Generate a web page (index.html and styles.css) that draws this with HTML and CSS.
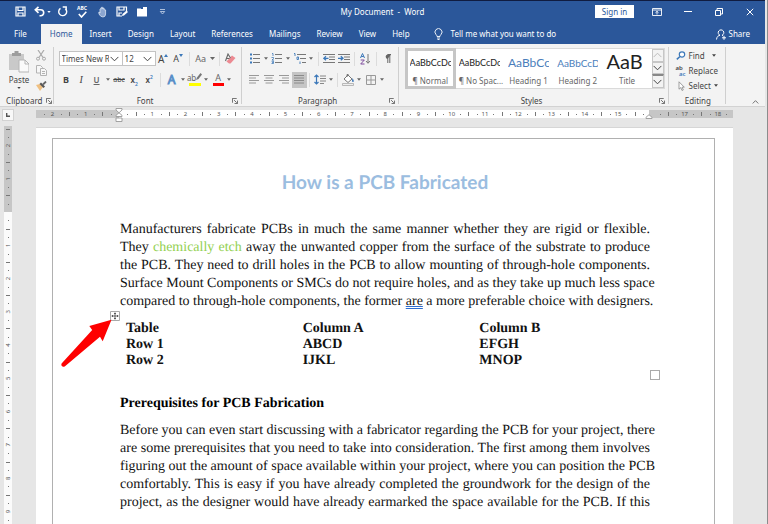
FILE: index.html
```html
<!DOCTYPE html>
<html lang="en">
<head>
<meta charset="utf-8">
<title>My Document - Word</title>
<link rel="stylesheet" href="styles.css">
</head>
<body>
<svg class="defs" aria-hidden="true">
  <symbol id="caret" viewBox="0 0 5 3"><path d="M0 0h5L2.500 3z" fill="currentColor"/></symbol>
  <symbol id="chev" viewBox="0 0 10 6"><path d="M.7.7 5 5 9.300.7" fill="none" stroke="currentColor" stroke-width="1.100"/></symbol>
  <symbol id="launch" viewBox="0 0 7 7"><path d="M.5 5.500v-5h5M2.500 2.500l3 3M6.500 3v3.500H3" fill="none" stroke="currentColor" stroke-width=".9"/></symbol>
</svg>
<div class="app">
  <header class="top">
    <div class="titlebar">
      <div class="quick">
        <button aria-label="Save"><svg width="11" height="11" viewBox="0 0 11 11"><path d="M1 1h9v9H1zM3 1v3.500h5V1M3 10V7h5v3" fill="none" stroke="#fff" stroke-width="1.200"/></svg></button>
        <button class="undo" aria-label="Undo"><svg width="11" height="11" viewBox="0 0 11 11"><path d="M4.500.8 1.300 3.800l3.200 3M1.500 3.800h5.200a3 3 0 0 1 0 6H5.500" fill="none" stroke="#fff" stroke-width="1.600"/></svg><svg class="c" width="4" height="2"><use href="#caret"/></svg></button>
        <button aria-label="Redo"><svg width="11" height="11" viewBox="0 0 11 11"><path d="M8.300 2.600A4 4 0 1 1 3.500 2.300M5.700 1h3.500v3.700" fill="none" stroke="#fff" stroke-width="1.400"/></svg></button>
        <button class="spell" aria-label="Spelling"><span>ABC</span><svg width="9" height="7" viewBox="0 0 9 7"><path d="m.8 3 2.700 3L8.300.7" fill="none" stroke="#fff" stroke-width="1.600"/></svg></button>
        <button aria-label="Touch mode"><svg width="9" height="12" viewBox="0 0 9 12"><path d="M2 7V3q.7-1 1.300 0V1.500q.8-1 1.400 0V3q0-1.500 1.400-.8V4q1-.9 1.500 0v4Q7.500 11 5 11T1 8L.8 6.200Q1.300 5.500 2 7" fill="#8ba5d0" stroke="#dbe4f3" stroke-width=".8"/></svg></button>
        <button aria-label="Save as"><svg width="12" height="11" viewBox="0 0 12 11"><path d="M6 10H1V1h9.500v4M3 1v3h5V1M3 10V7h3" fill="none" stroke="#fff" stroke-width="1.200"/><path d="m6 10 .5-2 4-3.500L12 6l-4 3.600z" fill="#fff"/></svg></button>
        <button aria-label="Open"><svg width="12" height="11" viewBox="0 0 12 11"><path d="M1 10.500v-8h4V3h2V1h4v9.500z" fill="#fff"/></svg></button>
        <button aria-label="Customize"><svg width="7" height="6" viewBox="0 0 7 6"><path d="M1 .5h5M1.300 2.500h4.400L3.500 5z" fill="none" stroke="#cdd8ec" stroke-width=".8"/></svg></button>
      </div>
      <div class="doc-name">My Document &nbsp;-&nbsp; Word</div>
      <div class="sys">
        <button class="signin">Sign in</button>
        <button aria-label="Ribbon display options"><svg width="10" height="8" viewBox="0 0 10 8"><path d="M.5.5h9v7h-9zM.5 2h9M5 6.500v-3M3.500 4.700 5 3.300l1.500 1.400" fill="none" stroke="#fff" stroke-width=".9"/></svg></button>
        <button aria-label="Minimize"><svg width="8" height="8"><path d="M0 3.500h8" stroke="#fff"/></svg></button>
        <button aria-label="Restore"><svg width="8" height="8" viewBox="0 0 8 8"><path d="M.5 2.500h5v5h-5zM2 2.500v-2h5.500V6h-2" fill="none" stroke="#fff"/></svg></button>
        <button aria-label="Close"><svg width="8" height="8" viewBox="0 0 8 8"><path d="m.8.8 6.400 6.400M7.200.8.8 7.200" stroke="#fff"/></svg></button>
      </div>
    </div>
    <nav class="tabs">
      <button class="file">File</button>
      <button class="active">Home</button>
      <button>Insert</button>
      <button>Design</button>
      <button>Layout</button>
      <button>References</button>
      <button>Mailings</button>
      <button>Review</button>
      <button>View</button>
      <button>Help</button>
      <button class="tell"><svg width="9" height="12" viewBox="0 0 9 12"><path d="M3 8.500Q3 7.500 2 6.500A3.500 3.500 0 1 1 7 6.500Q6 7.500 6 8.500zM3 10h3M3.500 11.500h2" fill="none" stroke="#fff" stroke-width=".9"/></svg>Tell me what you want to do</button>
      <button class="share"><svg width="10" height="11" viewBox="0 0 10 11"><path d="M.5 10.500C.8 7.500 2.500 6.500 4 6.300A2.800 2.800 0 1 1 6 6.300L7 6.800M6 8.800h4M8 6.800v4" fill="none" stroke="#fff"/></svg>Share</button>
    </nav>
  </header>

  <section class="ribbon">
    <div class="group clipboard">
      <div class="clip-tools">
        <button class="paste"><svg width="20" height="22" viewBox="0 0 20 22"><path d="M0 3h15v16H0z" fill="#c9c9c9"/><path d="M3 4V2h2.500V0h4v2H12v3H3z" fill="#9d9d9d"/><path d="M10 9h6l4 4v8H10z" fill="#fafafa" stroke="#b5b5b5"/><path d="M16 9v4h4" fill="none" stroke="#b5b5b5"/></svg>Paste<svg width="4" height="2"><use href="#caret"/></svg></button>
        <div class="clip-col">
          <button aria-label="Cut"><svg width="10" height="11" viewBox="0 0 10 11"><path d="m2 0 5 7.500M8 0 3 7.500" stroke="#a9a9a9" stroke-width="1.200"/><circle cx="2" cy="8.700" r="1.500" fill="none" stroke="#a9a9a9"/><circle cx="8" cy="8.700" r="1.500" fill="none" stroke="#a9a9a9"/></svg></button>
          <button aria-label="Copy"><svg width="11" height="11" viewBox="0 0 11 11"><path d="M.5.5h4l2 2V8h-6z" fill="#f7f7f7" stroke="#b3b3b3"/><path d="M4.500 3.500h4l2 2v5h-6zM6 6.500h3M6 8.500h3" fill="#f7f7f7" stroke="#b3b3b3"/></svg></button>
          <button aria-label="Format painter"><svg width="11" height="10" viewBox="0 0 11 10"><path d="m0 4 4-1 3 3-3 4z" fill="#efbf80"/><path d="m3.500 3 1.500-1.500 4 4L7.500 7z" fill="#555"/><path d="m7 3.500 3-3" stroke="#666" stroke-width="1.800"/></svg></button>
        </div>
      </div>
      <div class="label"><span>Clipboard</span><svg width="6" height="6"><use href="#launch"/></svg></div>
    </div>

    <div class="group font">
      <div class="row">
        <button class="combo name"><span>Times New R</span><svg width="9" height="6"><use href="#chev"/></svg></button>
        <button class="combo size"><span>12</span><svg width="9" height="6"><use href="#chev"/></svg></button>
        <button class="i15 grow" aria-label="Grow font"><span>A</span><svg width="4" height="3" viewBox="0 0 4 3"><path d="M0 3h4L2 0z" fill="#3c78b9"/></svg></button>
        <button class="i15 grow shrink" aria-label="Shrink font"><span>A</span><svg width="4" height="3" viewBox="0 0 4 3"><path d="M0 0h4L2 3z" fill="#3c78b9"/></svg></button>
        <i class="sep"></i>
        <button class="split"><span class="g aa">Aa</span><svg width="5" height="3"><use href="#caret"/></svg></button>
        <i class="sep"></i>
        <button class="i15" aria-label="Clear formatting"><svg width="11" height="11" viewBox="0 0 11 11"><path d="m1.500 8.500 5.500-6L10.500 5 5.500 10.500H4z" fill="#ec8a92"/><path d="M.5 8 3 1l2.500 4M1.500 5.500h3" fill="none" stroke="#666" stroke-width="1.100"/></svg></button>
      </div>
      <div class="row">
        <button class="i15"><b>B</b></button>
        <button class="i15"><em>I</em></button>
        <button class="split"><span class="g under">U</span><svg width="4" height="3"><use href="#caret"/></svg></button>
        <button class="i15"><s>abc</s></button>
        <button class="i15"><span class="x">x<sub>2</sub></span></button>
        <button class="i15"><span class="x">x<sup>2</sup></span></button>
        <i class="sep"></i>
        <button class="split"><span class="g outline">A</span><svg width="4" height="3"><use href="#caret"/></svg></button>
        <button class="split"><span class="g mark">ab<svg width="6" height="7" viewBox="0 0 6 7"><path d="M0 7 1 4.500 4.500 0 6 1.500 2.500 6z" fill="#777"/></svg></span><svg width="4" height="3"><use href="#caret"/></svg></button>
        <button class="split"><span class="g color">A</span><svg width="4" height="3"><use href="#caret"/></svg></button>
      </div>
      <div class="label"><span>Font</span><svg width="6" height="6"><use href="#launch"/></svg></div>
    </div>

    <div class="group para">
      <div class="row">
        <button class="split" aria-label="Bullets"><svg class="g" width="16" height="11" viewBox="0 0 16 11"><path d="M6 1.500h7M6 5.500h7M6 9.500h7" stroke="#777"/><path d="M3 .5h2v2H3zM3 4.500h2v2H3zM3 8.500h2v2H3z" fill="#3c78b9"/></svg><svg width="4" height="3"><use href="#caret"/></svg></button>
        <button class="split" aria-label="Numbering"><svg class="g" width="16" height="11" viewBox="0 0 16 11"><path d="M6 1.500h7M6 5.500h7M6 9.500h7" stroke="#777"/><path d="M3 .5h1v2.500M2.500 4.500h2v1l-1.500 1.500h2M2.500 8.200h2v2.300h-2M3 9.400h1" fill="none" stroke="#3c78b9" stroke-width=".8"/></svg><svg width="4" height="3"><use href="#caret"/></svg></button>
        <button class="split" aria-label="Multilevel list"><svg class="g" width="16" height="11" viewBox="0 0 16 11"><path d="M5 1.500h9M8 5.500h6M10 9.500h4" stroke="#777"/><path d="M2 .5h1v2.500M5 4h1.500v2.500H5zM8 8.500v2.500" fill="none" stroke="#3c78b9" stroke-width=".9"/></svg><svg width="4" height="3"><use href="#caret"/></svg></button>
        <i class="sep"></i>
        <button class="i15" aria-label="Decrease indent"><svg width="12" height="9" viewBox="0 0 12 9"><path d="M0 .5h12M6 3h6M6 5.500h6M0 8.500h12" stroke="#777"/><path d="M5.500 4.300H1M3 2.300.8 4.300 3 6.300" fill="none" stroke="#3c78b9" stroke-width="1.300"/></svg></button>
        <button class="i15" aria-label="Increase indent"><svg width="12" height="9" viewBox="0 0 12 9"><path d="M0 .5h12M6 3h6M6 5.500h6M0 8.500h12" stroke="#777"/><path d="M0 4.300h4.500M2.800 2.300 5 4.300 2.800 6.300" fill="none" stroke="#3c78b9" stroke-width="1.300"/></svg></button>
        <i class="sep"></i>
        <button class="i15" aria-label="Sort"><svg width="10" height="12" viewBox="0 0 10 12"><path d="m.5 5 2-4.500 2 4.500M1.200 3.500h2.600" fill="none" stroke="#3c78b9"/><path d="M.7 7h3.600L.7 11h3.800" fill="none" stroke="#7c4a9c"/><path d="M8 1v9M6 8l2 2.300L10 8" fill="none" stroke="#777"/></svg></button>
        <i class="sep"></i>
        <button class="i15" aria-label="Show marks"><svg width="7" height="9" viewBox="0 0 7 9"><path d="M3.500 5A2.300 2.300 0 0 1 3.500.5H7" fill="#666"/><path d="M3.800 9V.5H7M5.800 9V.5" fill="none" stroke="#666"/></svg></button>
      </div>
      <div class="row">
        <button class="i15" aria-label="Align left"><svg width="10" height="9"><path d="M0 .5h10M0 3h7M0 5.500h10M0 8h7" stroke="#999"/></svg></button>
        <button class="i15" aria-label="Center"><svg width="10" height="9"><path d="M0 .5h10M1.500 3h7M0 5.500h10M1.500 8h7" stroke="#999"/></svg></button>
        <button class="i15" aria-label="Align right"><svg width="10" height="9"><path d="M0 .5h10M3 3h7M0 5.500h10M3 8h7" stroke="#999"/></svg></button>
        <button class="i15 on" aria-label="Justify"><svg width="10" height="9"><path d="M0 .5h10M0 3h10M0 5.500h10M0 8h10" stroke="#8a8a8a"/></svg></button>
        <i class="sep tight"></i>
        <button class="split" aria-label="Line spacing"><svg class="g" width="16" height="11" viewBox="0 0 16 11"><path d="M8 2h6M8 4.500h6M8 7h6M8 9.500h4" stroke="#888"/><path d="M4.500 1v9M2.500 3l2-2 2 2M2.500 8l2 2 2-2" fill="none" stroke="#3c78b9" stroke-width="1.200"/></svg><svg width="4" height="3"><use href="#caret"/></svg></button>
        <i class="sep tight"></i>
        <button class="split" aria-label="Shading"><svg class="g" width="16" height="12" viewBox="0 0 16 12"><path d="m4 5 4-4 4 4-4 3.500z" fill="#fff" stroke="#777"/><path d="M7 3V.5h1.500" fill="none" stroke="#777"/><path d="M12.500 4q2 3 .8 4-1.300.3-1.300-1.500" fill="#3c78b9"/><path d="M2.500 9.500h11v2h-11z" fill="#eee" stroke="#aaa" stroke-width=".8"/></svg><svg width="4" height="3"><use href="#caret"/></svg></button>
        <button class="split" aria-label="Borders"><svg class="g" width="16" height="10" viewBox="0 0 16 10"><path d="M3.500.5h9v9h-9zM8 .5v9M3.500 5h9" fill="none" stroke="#999"/></svg><svg width="4" height="3"><use href="#caret"/></svg></button>
      </div>
      <div class="label"><span>Paragraph</span><svg width="6" height="6"><use href="#launch"/></svg></div>
    </div>

    <div class="group styles">
      <div class="gallery">
        <button class="style sel"><span class="sample">AaBbCcDc</span><span>¶ Normal</span></button>
        <button class="style"><span class="sample">AaBbCcDc</span><span>¶ No Spac...</span></button>
        <button class="style"><span class="sample h1s">AaBbCc</span><span>Heading 1</span></button>
        <button class="style"><span class="sample h2s">AaBbCcD</span><span>Heading 2</span></button>
        <button class="style"><span class="sample big">AaB</span><span>Title</span></button>
        <div class="scroll">
          <button class="off" aria-label="Previous styles"><svg class="flip" width="9" height="6"><use href="#chev"/></svg></button>
          <button aria-label="Next styles"><svg width="9" height="6"><use href="#chev"/></svg></button>
          <button class="more" aria-label="More styles"><svg width="9" height="6"><use href="#chev"/></svg></button>
        </div>
      </div>
      <div class="label"><span>Styles</span><svg width="6" height="6"><use href="#launch"/></svg></div>
    </div>

    <div class="group editing">
      <div class="edit-list">
        <button><svg width="10" height="9" viewBox="0 0 10 9"><circle cx="6" cy="3.500" r="2.700" fill="#fff" stroke="#3c78b9" stroke-width="1.200"/><path d="M4 5.500.8 8.300" stroke="#3c78b9" stroke-width="1.600"/></svg>Find<svg class="far" width="4" height="3"><use href="#caret"/></svg></button>
        <button><span class="rep"><span>ab</span><span>ac</span></span>Replace</button>
        <button><svg width="10" height="10" viewBox="0 0 10 10"><path d="M3 .8v7.400l1.800-1.600L6 9.500l1.300-.6L6 6.200h2.300z" fill="#fff" stroke="#888" stroke-width=".8"/></svg>Select<svg width="4" height="3"><use href="#caret"/></svg></button>
      </div>
      <div class="label"><span>Editing</span></div>
    </div>
    <button class="collapse" aria-label="Collapse the ribbon"><svg class="flip" width="7" height="4" viewBox="0 0 10 6"><use href="#chev"/></svg></button>
  </section>

  <div class="workspace">
    <div class="side">
      <button class="tabstop" aria-label="Tab stop"><svg width="4" height="4"><path d="M.7 0v3.300H4" fill="none" stroke="#555" stroke-width="1.400"/></svg></button>
      <div class="vruler"><svg id="vr" width="8" height="400"></svg></div>
    </div>
    <div class="canvas">
      <div class="hruler">
        <svg id="hr" width="697" height="8"></svg>
        <svg class="indent" width="8" height="14" viewBox="0 0 8 14"><path d="M1 .5h6V2L4 4.800 1 2zM1 8.500V7.300L4 4.800l3 2.500v1.200zM1 10h6v3.500H1z" fill="#fff" stroke="#999" stroke-width=".9"/></svg>
        <svg class="indent right" width="8" height="5" viewBox="0 0 8 5"><path d="M1 4.500V3.300L4 .7l3 2.600v1.200z" fill="#fff" stroke="#999" stroke-width=".9"/></svg>
      </div>
      <main class="page">
        <article class="sheet">
          <h1>How is a PCB Fabricated</h1>
          <p>Manufacturers fabricate PCBs in much the same manner whether they are rigid or flexible.<br>They <span class="link">chemically etch</span> away the unwanted copper from the surface of the substrate to produce<br>the PCB. They need to drill holes in the PCB to allow mounting of through-hole components.<br>Surface Mount Components or SMCs do not require holes, and as they take up much less space<br>compared to through-hole components, the former <span class="gram">are</span> a more preferable choice with designers.</p>
          <div class="table-wrap">
            <table>
              <tr><th>Table</th><th>Column A</th><th>Column B</th></tr>
              <tr><th>Row 1</th><td>ABCD</td><td>EFGH</td></tr>
              <tr><th>Row 2</th><td>IJKL</td><td>MNOP</td></tr>
            </table>
            <svg class="handle" width="10" height="10" viewBox="0 0 10 10"><path d="M.5.5h9v9h-9z" fill="#fff" stroke="#aaa"/><path d="M5 1.500v7M1.500 5h7M4 2.500h2M4 7.500h2M2.500 4v2M7.500 4v2" stroke="#444" stroke-width=".8"/></svg>
            <svg class="arrow" width="54" height="50" viewBox="0 0 54 50"><path d="M51.500 1.700 29.300 8l2.900 4L1.600 45.500q-.8 1.800.4 2.800 1.300 1 3-.1L40 18.800l2.700 4.400z" fill="#fe0000"/></svg>
            <i class="resize"></i>
          </div>
          <h2>Prerequisites for PCB Fabrication</h2>
          <p>Before you can even start discussing with a fabricator regarding the PCB for your project, there<br>are some prerequisites that you need to take into consideration. The first among them involves<br>figuring out the amount of space available within your project, where you can position the PCB<br>comfortably. This is easy if you have already completed the groundwork for the design of the<br>project, as the designer would have already earmarked the space available for the PCB. If this</p>
        </article>
      </main>
    </div>
  </div>
</div>
<script src="ruler.js"></script>
</body>
</html>
```
FILE: styles.css
```css
* { box-sizing: border-box; }
body {
  margin: 0;
  height: 100vh;
  overflow: hidden;
  background: #e6e6e6;
  font: 8px/12px "Noto Sans", "Open Sans", sans-serif;
  color: #333;
}
button {
  display: flex;
  align-items: center;
  justify-content: center;
  padding: 0;
  border: 0;
  background: none;
  font: inherit;
  color: inherit;
  white-space: nowrap;
}
svg { display: block; flex: none; }
.defs { position: absolute; width: 0; height: 0; }
.app {
  display: flex;
  flex-direction: column;
  height: 100vh;
  padding-right: 2px;
  border-right: 1px solid #8c8c8c;
}

/* Title bar and tabs */
.top { background: #2b579a; border-top: 1px solid #101c40; color: #fff; }
.titlebar {
  display: grid;
  grid-template-columns: 1fr auto 1fr;
  align-items: center;
  height: 23px;
  padding-bottom: 2px;
}
.quick { display: flex; padding-left: 10px; }
.quick button { width: 20px; height: 20px; }
.quick .undo { width: 22px; gap: 2px; padding-left: 2px; }
.quick .spell { flex-direction: column; }
.spell span { font-size: 5px; line-height: 5px; font-weight: 700; }
.sys { display: flex; align-items: center; justify-content: flex-end; }
.sys button { width: 31px; height: 20px; }
.sys .signin {
  width: 39px;
  height: 13px;
  margin-right: 7px;
  background: #fff;
  color: #2b579a;
}
.tabs { display: flex; height: 20px; }
.tabs button { padding: 0 8px; }
.tabs .file { padding: 0 14px; }
.tabs .active { padding: 0 9px; background: #f3f3f3; color: #2b579a; }
.tabs .tell { gap: 8px; padding-left: 16px; }
.tabs .share { gap: 3px; margin-left: auto; padding-right: 15px; }

/* Ribbon */
.ribbon {
  display: flex;
  height: 63px;
  background: #f3f3f3;
  border-bottom: 1px solid #d2d2d2;
  color: #444;
}
.group {
  position: relative;
  display: flex;
  flex-direction: column;
  padding: 4px 4px 0 5px;
}
.group::after {
  content: "";
  position: absolute;
  inset: 3px 0 2px auto;
  width: 1px;
  background: #cfcfcf;
}
.label {
  display: flex;
  align-items: center;
  margin-top: auto;
  height: 11px;
}
.label span { flex: 1; text-align: center; }
.group.clipboard { width: 54px; padding: 4px 2px 0 3px; }
.font { width: 188px; }
.para { width: 157px; }
.styles { flex: 1; min-width: 270px; padding-left: 6px; }
.editing { width: 58px; }
.row { display: flex; align-items: center; height: 21px; }
.i15 { width: 15px; height: 16px; }
.on { background: #c5c5c5; }
.split { width: 23px; height: 16px; justify-content: flex-start; gap: 1px; color: #666; }
.split .g { width: 16px; text-align: center; }
.sep { width: 1px; height: 14px; margin: 0 3px; background: #dcdcdc; }
.sep.tight { margin: 0 2px; }

.clip-tools { display: flex; }
.paste { flex-direction: column; width: 32px; height: 44px; gap: 1px; }
.clip-col { display: flex; flex-direction: column; }
.clip-col button { width: 12px; height: 15px; }

.combo {
  height: 15px;
  padding: 0 3px 0 2px;
  border: 1px solid #c3c3c3;
  background: #fff;
  justify-content: space-between;
}
.combo span { overflow: hidden; }
.combo.name { width: 64px; gap: 1px; }
.combo.size { width: 34px; margin-left: -1px; }
.grow { align-items: flex-start; font-size: 10px; line-height: 16px; }
.grow svg { margin-top: 3px; }
.shrink { font-size: 9px; }
.aa { font-size: 9px; }
.under { text-decoration: underline; font-weight: 600; }
.row em { font-family: "Liberation Serif", serif; font-size: 10px; }
.row b { font-size: 9px; }
.row s { font-size: 7px; }
.x { font-weight: 600; }
.x sub, .x sup { font-size: 5px; line-height: 0; color: #3c78b9; }
.outline { font-size: 12px; color: #fff; -webkit-text-stroke: 1px #5a8fc8; }
.split .mark { display: flex; justify-content: center; height: 13px; line-height: 9px; border-bottom: 3px solid #ff0; width: 12px; margin: 0 2px; }
.split .color { height: 13px; width: 11px; margin: 0 2px 0 3px; line-height: 10px; font-size: 9px; border-bottom: 3px solid #f00; }

.gallery {
  display: flex;
  height: 41px;
  border: 1px solid #dadada;
  background: #fff;
}
.style {
  flex: 1;
  flex-direction: column;
  align-items: stretch;
  min-width: 0;
  padding: 0 4px;
  color: #666;
}
.style.sel { outline: 3px solid #c6c6c6; outline-offset: -2px; }
.sample {
  height: 24px;
  overflow: hidden;
  font: 9px/24px Lato, sans-serif;
  color: #222;
  text-align: left;
}
.h1s { font-size: 12px; color: #4a7ebb; }
.h2s { font-size: 10px; color: #4a7ebb; }
.big { font-size: 20px; line-height: 20px; }
.scroll { display: flex; flex-direction: column; width: 12px; }
.scroll button { flex: 1; border: 1px solid #c6c6c6; background: #f3f3f3; }
.scroll .off { color: #bbb; }
.scroll .more { border-top: 2px solid #888; }
.flip { transform: scaleY(-1); }

.edit-list button { height: 15px; gap: 3px; }
.edit-list { padding-left: 2px; }
.far { margin-left: 4px; }
.rep { width: 10px; font-size: 6px; line-height: 6px; font-weight: 600; text-align: left; }
.rep span { display: block; }
.rep span + span { color: #3c78b9; text-align: right; }
.collapse { width: 39px; align-items: flex-end; padding: 0 0 2px 20px; }

/* Rulers */
.workspace { display: flex; flex: 1; min-height: 0; }
.side { width: 36px; padding: 2px 0 0 2px; overflow: hidden; }
.tabstop { width: 12px; height: 12px; background: #f8f8f8; border: 1px solid #d2d2d2; }
.vruler { width: 8px; margin: 5px 0 0 2px; background: linear-gradient(#c6c6c6 86px, #fbfbfb 86px); }
.canvas { flex: 1; display: flex; flex-direction: column; margin-right: 32px; min-width: 0; }
.hruler {
  position: relative;
  height: 8px;
  margin: 3px 0 9px;
  background: linear-gradient(90deg, #c6c6c6 83px, #fff 83px calc(100% - 84px), #c6c6c6 calc(100% - 84px));
}
.indent { position: absolute; left: 79px; top: -2px; }
.indent.right { left: auto; right: 80px; top: 4px; }

/* Document */
.page {
  flex: 1;
  min-height: 0;
  padding: 10px 18px 0 16px;
  background: #fff;
  border-top: 1px solid #d6d6d6;
  overflow: hidden;
}
.sheet {
  height: 400px;
  padding: 32px 64px 0 67px;
  border: 1px solid #b0b0b0;
  font: 14px/18px "Liberation Serif", serif;
  text-rendering: geometricPrecision;
  color: #111;
}
h1 { margin: 0 0 26px; font: 700 19px/24px Lato, sans-serif; color: #9bbde0; text-align: center; }
p { margin: 0; text-align: justify; text-align-last: justify; white-space: nowrap; }
.link { color: #92d050; }
.gram { text-decoration: underline double 1px #2f6fd0; text-underline-offset: 1px; }
.table-wrap { position: relative; margin: 10px 0 26px; }
table { width: 100%; table-layout: fixed; border-collapse: collapse; font-weight: 700; line-height: 16px; }
th, td { padding: 0 6px; text-align: left; }
.handle { position: absolute; left: -10px; top: -10px; }
.arrow { position: absolute; left: -60px; top: -3px; }
.resize { position: absolute; right: -10px; top: 49px; width: 10px; height: 10px; border: 1px solid #aaa; }
h2 { margin: 0 0 9px; font-size: 14px; line-height: 18px; color: #000; }
```
FILE: ruler.js
```js
// Draws centimetre numbers, half ticks and quarter dots along a ruler.
const UNIT = 33.27;

function marks(zero, length, hidden, place) {
  let out = "";
  const first = Math.ceil((-zero / UNIT) * 4);
  const last = Math.floor(((length - zero) / UNIT) * 4);
  for (let q = first; q <= last; q++) {
    const pos = zero + (q * UNIT) / 4;
    if (q === 0 || hidden.includes(q / 4)) continue;
    if (q % 4 === 0) out += place(pos, "number", Math.abs(q / 4));
    else out += place(pos, q % 2 === 0 ? "tick" : "dot");
  }
  return out;
}

const style = 'font-size="6" text-anchor="middle" fill="#555"';

document.getElementById("hr").innerHTML = marks(83, 697, [16], (x, kind, n) => {
  if (kind === "number") return `<text x="${x}" y="6" ${style}>${n}</text>`;
  const h = kind === "tick" ? 4 : 1;
  return `<rect x="${Math.round(x)}" y="${4 - Math.floor(h / 2)}" width="1" height="${h}" fill="#777"/>`;
});

document.getElementById("vr").innerHTML = marks(86, 400, [], (y, kind, n) => {
  if (kind === "number") return `<text transform="translate(6 ${y}) rotate(-90)" ${style}>${n}</text>`;
  const w = kind === "tick" ? 4 : 1;
  return `<rect x="${4 - Math.floor(w / 2)}" y="${Math.round(y)}" width="${w}" height="1" fill="#777"/>`;
});
```
